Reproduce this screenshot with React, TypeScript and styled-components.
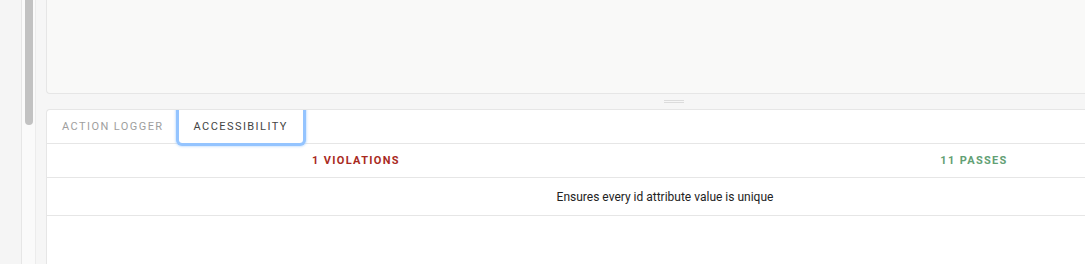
import React from 'react'
import styled, { createGlobalStyle } from 'styled-components'

const GlobalStyle = createGlobalStyle`
  html, body {
    margin: 0;
    padding: 0;
    overflow: hidden;
    background: #f6f6f6;
  }
  body {
    font-family: Roboto, 'Liberation Sans', sans-serif;
    -webkit-font-smoothing: antialiased;
  }
`

const Layout = styled.div`
  display: flex;
  height: 264px;
  width: 100vw;
  overflow: hidden;
`

const Sidebar = styled.div`
  width: 21px;
  flex: none;
  background: #f5f5f5;
  border-right: 1px solid #e6e6e6;
`

const ScrollTrack = styled.div`
  width: 13px;
  flex: none;
  display: flex;
  justify-content: center;
  background: #fafafa;
  border-right: 1px solid #ececec;
`

const ScrollThumb = styled.div`
  width: 8px;
  height: 125px;
  margin-left: 1px;
  border-radius: 0 0 4px 4px;
  background: #c2c2c2;
`

// the addon panel is wider than the window, so it is cut at the right
const Main = styled.div`
  display: flex;
  flex-direction: column;
  padding-left: 10px;
  width: 1237px;
  flex: none;
`

const Preview = styled.div`
  height: 93px;
  background: #f9f9f8;
  border: 1px solid #e6e6e6;
  border-top: none;
  border-right: none;
  border-bottom-left-radius: 4px;
`

const HandleRow = styled.div`
  height: 15px;
  display: flex;
  align-items: center;
  justify-content: center;
  padding-left: 18px;
`

const Handle = styled.div`
  width: 20px;
  height: 1px;
  border-top: 1px solid #dcdcdc;
  border-bottom: 1px solid #dcdcdc;
`

const Panel = styled.div`
  flex: 1;
  background: #fff;
  border: 1px solid #e6e6e6;
  border-right: none;
  border-bottom: none;
  border-top-left-radius: 4px;
  overflow: hidden;
  display: flex;
  flex-direction: column;
`

const TabBar = styled.div`
  display: flex;
  height: 33px;
  border-bottom: 1px solid #e6e6e6;
`

const Tab = styled.div<{ $active?: boolean }>`
  display: flex;
  align-items: center;
  padding: 0 15px;
  font-size: 11px;
  letter-spacing: 0.13em;
  color: ${(p) => (p.$active ? '#444' : '#9e9e9e')};
  box-shadow: ${(p) =>
    p.$active ? '0 0 0 3px #94c4ff, 0 0 2px 4px rgba(150, 200, 255, 0.45)' : 'none'};
  border-radius: 0 0 3px 3px;
  position: relative;
  z-index: ${(p) => (p.$active ? 1 : 0)};
`

const SummaryRow = styled.div`
  display: flex;
  height: 33px;
  border-bottom: 1px solid #e6e6e6;
`

const Summary = styled.div<{ $color: string }>`
  flex: 1;
  display: flex;
  align-items: center;
  justify-content: center;
  font-size: 11px;
  font-weight: 700;
  letter-spacing: 0.12em;
  color: ${(p) => p.$color};
`

const RuleRow = styled.div`
  height: 37px;
  display: flex;
  align-items: center;
  justify-content: center;
  font-size: 12px;
  color: #222;
  border-bottom: 1px solid #e6e6e6;
`

export default function App() {
  return (
    <>
      <GlobalStyle />
      <Layout>
        <Sidebar />
        <ScrollTrack>
          <ScrollThumb />
        </ScrollTrack>
        <Main>
          <Preview />
          <HandleRow>
            <Handle />
          </HandleRow>
          <Panel>
            <TabBar>
              <Tab>ACTION LOGGER</Tab>
              <Tab $active>ACCESSIBILITY</Tab>
            </TabBar>
            <SummaryRow>
              <Summary $color="#a92a1e">1 VIOLATIONS</Summary>
              <Summary $color="#62a074">11 PASSES</Summary>
            </SummaryRow>
            <RuleRow>Ensures every id attribute value is unique</RuleRow>
          </Panel>
        </Main>
      </Layout>
    </>
  )
}
